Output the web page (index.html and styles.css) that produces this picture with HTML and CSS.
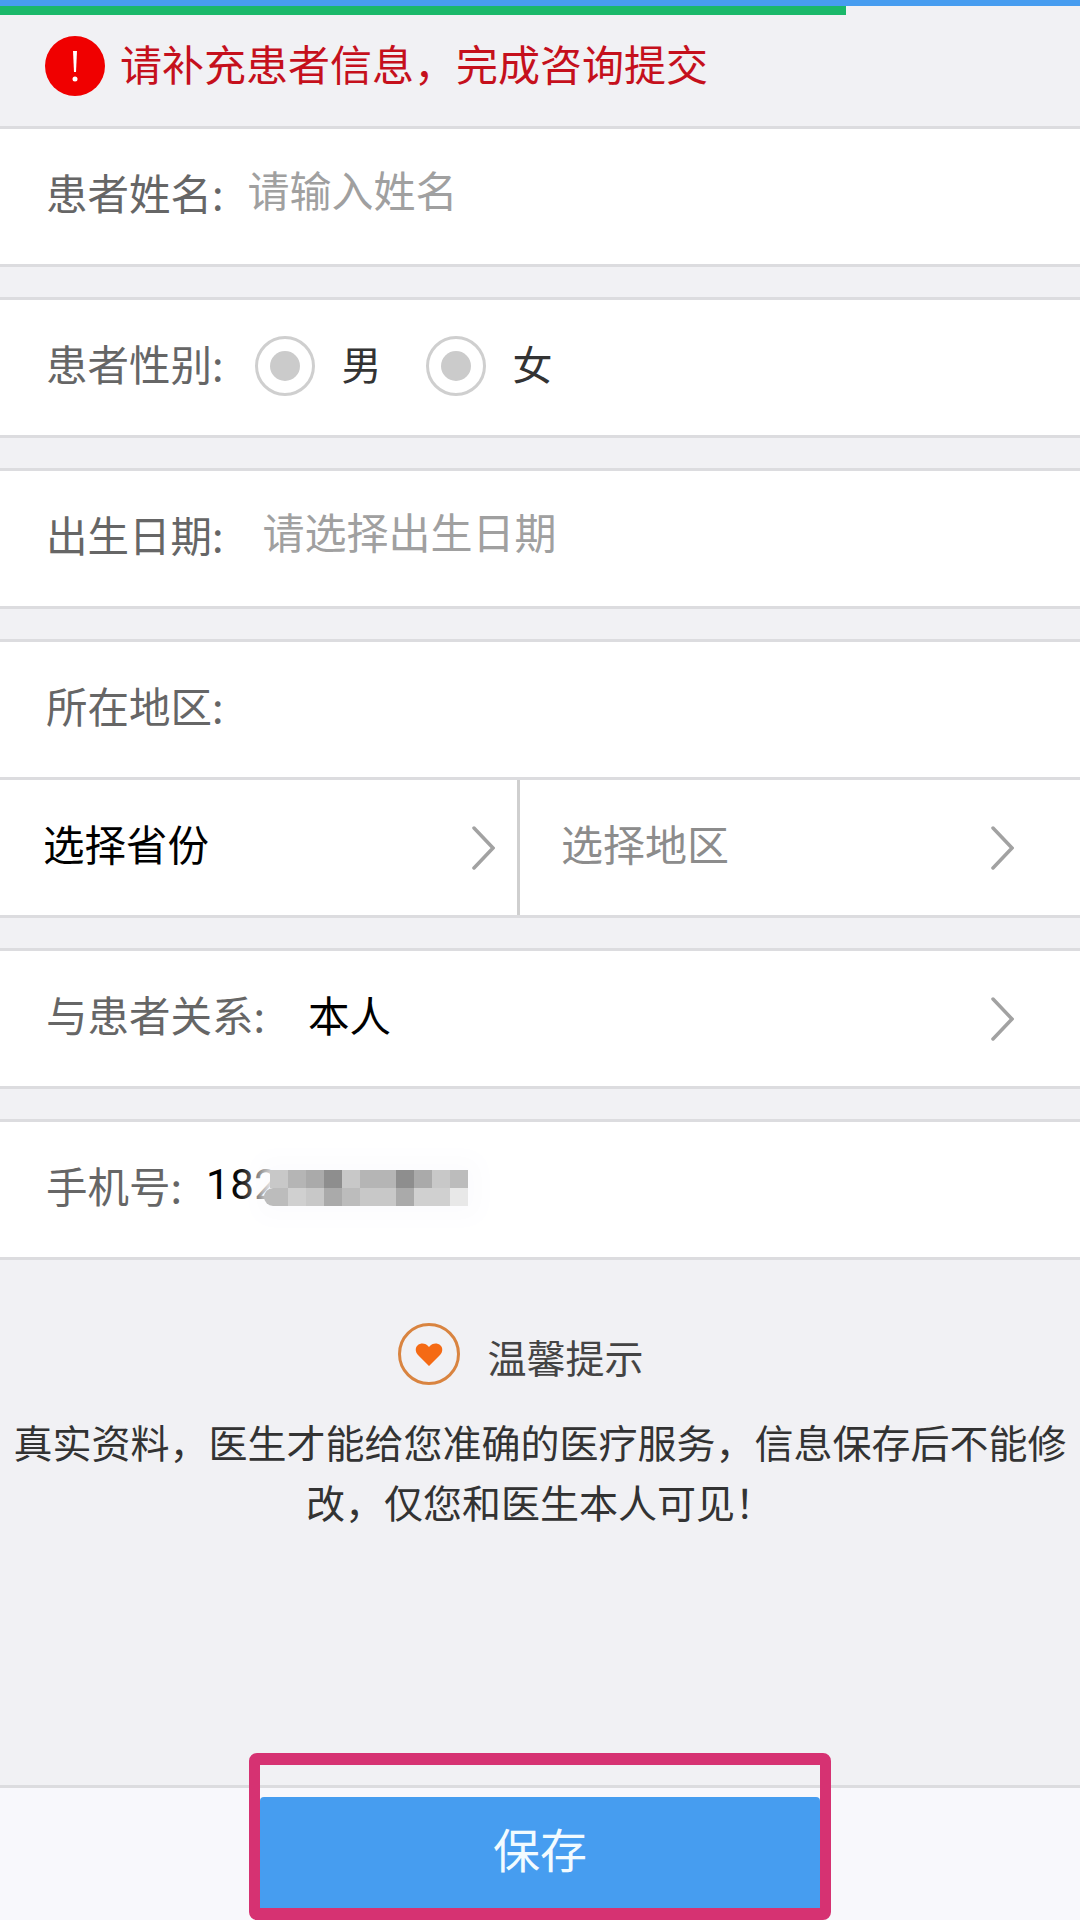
FILE: index.html
```html
<!DOCTYPE html>
<html lang="zh-CN">
<head>
  <meta charset="UTF-8">
  <title>补充患者信息</title>
  <link rel="stylesheet" href="styles.css">
</head>
<body>
  <div class="page">
    <div class="progress"><div class="progress-fill"></div></div>

    <div class="notice">
      <svg class="notice-icon" viewBox="0 0 60 60">
        <circle cx="30" cy="30" r="30" fill="#f00000"/>
        <path d="M28 15h4l-1 21h-2z" fill="#fff"/>
        <circle cx="30" cy="43" r="2.500" fill="#fff"/>
      </svg>
      <span class="notice-text">请补充患者信息，完成咨询提交</span>
    </div>

    <div class="row">
      <span class="label">患者姓名:</span>
      <span class="placeholder name-hint">请输入姓名</span>
    </div>

    <div class="row gap">
      <span class="label">患者性别:</span>
      <span class="radio first"><i></i></span>
      <span class="radio-text">男</span>
      <span class="radio"><i></i></span>
      <span class="radio-text">女</span>
    </div>

    <div class="row gap">
      <span class="label">出生日期:</span>
      <span class="placeholder date-hint">请选择出生日期</span>
    </div>

    <div class="row gap region-title">
      <span class="label">所在地区:</span>
    </div>
    <div class="row split">
      <div class="cell province">
        <span class="value">选择省份</span>
        <svg class="chevron" viewBox="0 0 23 44"><path d="M2 2l19 20L2 42"/></svg>
      </div>
      <div class="cell area">
        <span class="placeholder dark">选择地区</span>
        <svg class="chevron" viewBox="0 0 23 44"><path d="M2 2l19 20L2 42"/></svg>
      </div>
    </div>

    <div class="row gap">
      <span class="label">与患者关系:</span>
      <span class="value relation">本人</span>
      <svg class="chevron push" viewBox="0 0 23 44"><path d="M2 2l19 20L2 42"/></svg>
    </div>

    <div class="row gap">
      <span class="label">手机号:</span>
      <span class="value phone">182</span>
      <div class="mosaic">
        <i class="s3"></i><i class="s5"></i><i class="s6"></i><i class="s8"></i><i class="s3"></i><i class="s5"></i><i class="s5"></i><i class="s8"></i><i class="s6"></i><i class="s3"></i><i class="s4"></i>
        <i class="s4 lead"></i><i class="s2"></i><i class="s3"></i><i class="s6"></i><i class="s4"></i><i class="s3"></i><i class="s3"></i><i class="s6"></i><i class="s2"></i><i class="s2"></i><i class="s1"></i>
      </div>
    </div>

    <div class="tips">
      <div class="tips-title">
        <svg class="heart-icon" viewBox="0 0 62 62">
          <circle cx="31" cy="31" r="29.500" fill="none" stroke="#d98440" stroke-width="3"/>
          <path d="M31 43 20 32c-3-3-3-8 0-10 3-2.500 8-2 11 2 3-4 8-4.500 11-2 3 2 3 7 0 10z" fill="#f56a14"/>
        </svg>
        <span class="tips-heading">温馨提示</span>
      </div>
      <p>真实资料，医生才能给您准确的医疗服务，信息保存后不能修改，仅您和医生本人可见！</p>
    </div>

    <div class="footer">
      <button class="save">保存</button>
      <div class="highlight"></div>
    </div>
  </div>
</body>
</html>
```

FILE: styles.css
```css
* {
  box-sizing: border-box;
}
body {
  margin: 0;
  font-family: "Noto Sans CJK SC", "Noto Sans", sans-serif;
  background-color: #f1f1f4;
}
.page {
  display: flex;
  flex-direction: column;
  height: 1920px;
  overflow: hidden;
}
.progress {
  height: 15px;
  flex-shrink: 0;
  border-top: 6px solid #479df0;
}
.progress-fill {
  width: 846px;
  height: 9px;
  background-color: #1bb86a;
}
.notice {
  display: flex;
  align-items: center;
  height: 111px;
  padding: 0 0 9px 45px;
  font-size: 42px;
  color: #c5101c;
  flex-shrink: 0;
}
.notice-icon {
  width: 60px;
  height: 60px;
  margin-right: 15px;
}
.notice-text {
  margin-bottom: 8px;
}
.row {
  display: flex;
  align-items: center;
  flex-shrink: 0;
  height: 141px;
  padding: 0 48px 0 46px;
  background-color: #fff;
  border-top: 3px solid #dcdcdf;
  border-bottom: 3px solid #dcdcdf;
  position: relative;
}
.gap {
  margin-top: 30px;
}
.label {
  margin-bottom: 10px;
  font-size: 41.500px;
  color: #666;
}
.placeholder {
  margin-bottom: 10px;
  font-size: 42px;
  color: #a0a0a0;
}
.placeholder.dark {
  color: #8c8c8c;
}
.name-hint {
  margin: 0 0 16px 24px;
}
.date-hint {
  margin: 0 0 16px 39px;
}
.value {
  margin-bottom: 10px;
  font-size: 41.500px;
  color: #000;
}
.radio {
  display: flex;
  align-items: center;
  justify-content: center;
  width: 60px;
  height: 60px;
  margin: 0 0 3px 44px;
  border: 3px solid #cfcfcf;
  border-radius: 50%;
}
.radio.first {
  margin-left: 31px;
}
.radio i {
  width: 30px;
  height: 30px;
  border-radius: 50%;
  background-color: #cbcbcb;
}
.radio-text {
  margin: 0 0 10px 27px;
  font-size: 40px;
  color: #333;
}
.split {
  height: 138px;
  padding: 0;
  border-top: 0;
}
.cell {
  display: flex;
  align-items: center;
  justify-content: space-between;
  height: 100%;
}
.province {
  width: 520px;
  padding: 0 22px 0 43px;
  border-right: 3px solid #cfcfcf;
}
.area {
  flex: 1;
  padding: 0 66px 0 41px;
}
.chevron {
  width: 23px;
  height: 44px;
  fill: none;
  stroke: #a2a2a2;
  stroke-width: 3.500px;
  stroke-linecap: round;
}
.chevron.push {
  margin-left: auto;
  margin-right: 18px;
}
.relation {
  margin-left: 43px;
}
.phone {
  margin-left: 24px;
  font-family: Roboto, sans-serif;
  font-size: 42px;
  letter-spacing: 0.500px;
}
.mosaic {
  position: absolute;
  left: 270px;
  top: 48px;
  display: grid;
  grid-template-columns: repeat(11, 18px);
  grid-auto-rows: 18px;
  box-shadow: 0 0 24px 14px #fcfcfe;
}
.mosaic i {
  display: block;
}
.mosaic .lead {
  margin-left: -6px;
  border-radius: 10px 0 0 10px;
}
.s1 { background-color: #e8e8e8; }
.s2 { background-color: #d0d0d0; }
.s3 { background-color: #c8c8c8; }
.s4 { background-color: #bcbcbc; }
.s5 { background-color: #b5b5b5; }
.s6 { background-color: #aaa; }
.s8 { background-color: #8e8e8e; }
.tips {
  flex: 1;
  padding-top: 63px;
  text-align: center;
}
.tips-title {
  display: flex;
  align-items: center;
  justify-content: center;
  padding-right: 38px;
  font-size: 39px;
  color: #444;
}
.tips-heading {
  margin-top: 4px;
}
.heart-icon {
  width: 62px;
  height: 62px;
  margin-right: 27px;
}
.tips p {
  margin: 26px 0 0;
  padding: 0 10px;
  font-size: 39px;
  line-height: 60px;
  color: #333;
}
.footer {
  position: relative;
  flex-shrink: 0;
  height: 135px;
  padding: 9px 260px 12px;
  background-color: #f8f8fc;
  border-top: 3px solid #dcdcdf;
}
.save {
  display: block;
  width: 100%;
  height: 111px;
  padding: 0 0 10px;
  border: 0;
  border-radius: 4px 4px 0 0;
  background-color: #469df0;
  color: #f2fbff;
  font-family: inherit;
  font-size: 47px;
}
/* annotation drawn over the button */
.highlight {
  position: absolute;
  left: 249px;
  top: -35px;
  width: 582px;
  height: 167px;
  border: 12px solid #d63272;
  border-width: 12px 11px;
  border-radius: 8px;
}
```
